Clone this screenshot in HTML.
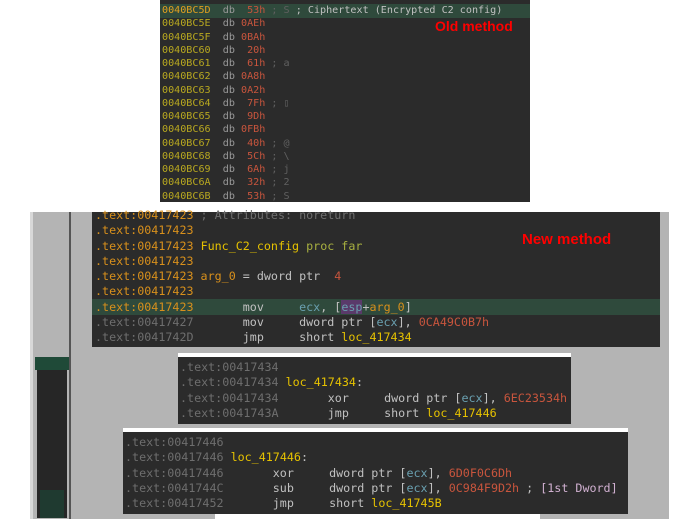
<!DOCTYPE html><html><head><style>
body{margin:0;width:690px;height:530px;background:#fff;position:relative;overflow:hidden;font-family:"DejaVu Sans Mono","Liberation Mono",monospace;}
.box{position:absolute;background:#2b2b2b;}
.a{color:#b8a820}.g{color:#9a9a9a}.v{color:#c8553d}.c{color:#606060}
.t{color:#d8901c}.d{color:#6e6e6e}.y{color:#e6c200}.o{color:#a8b040}.w{color:#c0c0c0}.b{color:#6aa0b0}.p{color:#d0b0d0}
.lbl{position:absolute;color:#f00;font-family:"Liberation Sans",sans-serif;font-weight:bold;}
</style></head><body>
<div class="box" style="left:160px;top:0;width:370px;height:202px">
<div style="position:absolute;left:0;top:4px;width:370px;height:14px;background:#2f4a3c"></div>
<div class="lbl" style="left:275px;top:18px;font-size:14px">Old method</div>
<div style="position:absolute;left:2px;top:4px;font-size:10.1px;line-height:13.25px;white-space:pre"><span class="a" style="color:#e0a020">0040BC5D</span><span class="g">  db  </span><span class="v">53h</span><span class="c"> ; S </span><span class="w">; Ciphertext (Encrypted C2 config)</span>
<span class="a">0040BC5E</span><span class="g">  db </span><span class="v">0AEh</span>
<span class="a">0040BC5F</span><span class="g">  db </span><span class="v">0BAh</span>
<span class="a">0040BC60</span><span class="g">  db  </span><span class="v">20h</span>
<span class="a">0040BC61</span><span class="g">  db  </span><span class="v">61h</span><span class="c"> ; a</span>
<span class="a">0040BC62</span><span class="g">  db </span><span class="v">0A8h</span>
<span class="a">0040BC63</span><span class="g">  db </span><span class="v">0A2h</span>
<span class="a">0040BC64</span><span class="g">  db  </span><span class="v">7Fh</span><span class="c"> ; ▯</span>
<span class="a">0040BC65</span><span class="g">  db  </span><span class="v">9Dh</span>
<span class="a">0040BC66</span><span class="g">  db </span><span class="v">0FBh</span>
<span class="a">0040BC67</span><span class="g">  db  </span><span class="v">40h</span><span class="c"> ; @</span>
<span class="a">0040BC68</span><span class="g">  db  </span><span class="v">5Ch</span><span class="c"> ; \</span>
<span class="a">0040BC69</span><span class="g">  db  </span><span class="v">6Ah</span><span class="c"> ; j</span>
<span class="a">0040BC6A</span><span class="g">  db  </span><span class="v">32h</span><span class="c"> ; 2</span>
<span class="a">0040BC6B</span><span class="g">  db  </span><span class="v">53h</span><span class="c"> ; S</span></div>
</div>
<div style="position:absolute;left:30px;top:212px;width:636px;height:307px;background:#b4b4b4;border-left:3px solid #d8d8d8"></div>
<div style="position:absolute;left:69px;top:212px;width:2px;height:307px;background:#555"></div>
<div style="position:absolute;left:35px;top:357px;width:34px;height:13px;background:#1f4a38"></div>
<div style="position:absolute;left:37px;top:370px;width:30px;height:148px;background:#262626"></div>
<div style="position:absolute;left:40px;top:490px;width:24px;height:28px;background:#1f3a30"></div>
<div class="box" style="left:92px;top:212px;width:568px;height:135px;font-size:11.7px;line-height:15.3px">
<div class="lbl" style="left:430px;top:20px;font-size:15px">New method</div>
<div style="position:absolute;left:0;top:87px;width:568px;height:16px;background:#2f4a3c"></div>
<div style="position:absolute;left:3px;top:-4px;white-space:pre"><span class="t">.text:00417423</span><span class="d"> ; Attributes: noreturn</span>
<span class="t">.text:00417423</span>
<span class="t">.text:00417423 </span><span class="y">Func_C2_config</span><span class="o"> proc far</span>
<span class="t">.text:00417423</span>
<span class="t">.text:00417423 arg_0</span><span class="w"> = dword ptr  </span><span class="v">4</span>
<span class="t">.text:00417423</span>
<span class="t">.text:00417423</span><span class="w">       mov     </span><span class="b">ecx</span><span class="w">, [</span><span class="b" style="background:#5a3a6a">esp</span><span class="w">+</span><span class="t">arg_0</span><span class="w">]</span>
<span class="d">.text:00417427</span><span class="w">       mov     dword ptr [</span><span class="b">ecx</span><span class="w">], </span><span class="v">0CA49C0B7h</span>
<span class="d">.text:0041742D</span><span class="w">       jmp     short </span><span class="y">loc_417434</span></div>
</div>
<div class="box" style="left:178px;top:353px;width:393px;height:67px;border-top:4px solid #fff;font-size:11.7px;line-height:15.3px">
<div style="position:absolute;left:2px;top:3px;white-space:pre"><span class="d">.text:00417434</span>
<span class="d">.text:00417434 </span><span class="y">loc_417434</span><span class="w">:</span>
<span class="d">.text:00417434</span><span class="w">       xor     dword ptr [</span><span class="b">ecx</span><span class="w">], </span><span class="v">6EC23534h</span>
<span class="d">.text:0041743A</span><span class="w">       jmp     short </span><span class="y">loc_417446</span></div>
</div>
<div class="box" style="left:123px;top:428px;width:505px;height:82px;border-top:4px solid #fff;font-size:11.7px;line-height:15.3px">
<div style="position:absolute;left:2px;top:3px;white-space:pre"><span class="d">.text:00417446</span>
<span class="d">.text:00417446 </span><span class="y">loc_417446</span><span class="w">:</span>
<span class="d">.text:00417446</span><span class="w">       xor     dword ptr [</span><span class="b">ecx</span><span class="w">], </span><span class="v">6D0F0C6Dh</span>
<span class="d">.text:0041744C</span><span class="w">       sub     dword ptr [</span><span class="b">ecx</span><span class="w">], </span><span class="v">0C984F9D2h</span><span class="w"> ; </span><span class="p">[1st Dword]</span>
<span class="d">.text:00417452</span><span class="w">       jmp     short </span><span class="y">loc_41745B</span></div>
</div>
<div style="position:absolute;left:215px;top:514px;width:325px;height:5px;background:#fff"></div>
</body></html>
